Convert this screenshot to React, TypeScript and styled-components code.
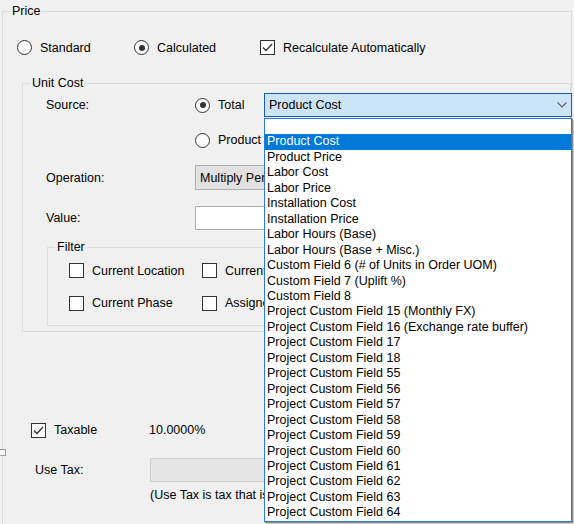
import React from 'react';
import styled, { createGlobalStyle } from 'styled-components';

const GlobalStyle = createGlobalStyle`
  html, body {
    margin: 0;
    padding: 0;
    background: #f0f0f0;
  }
  body {
    font-family: 'Liberation Sans', Arial, sans-serif;
    font-size: 12.5px;
    color: #000;
  }
`;

const Screen = styled.div`
  position: relative;
  width: 574px;
  height: 524px;
  overflow: hidden;
  box-sizing: border-box;
  padding: 4px 0 0 2px;
  background: #f0f0f0;
`;

const Group = styled.fieldset<{ $top: number; $left: number; $right: number; $pb?: number; $open?: boolean }>`
  margin: ${(p) => p.$top}px ${(p) => p.$right}px 0 ${(p) => p.$left}px;
  padding: 0 0 ${(p) => p.$pb ?? 0}px 0;
  border: 1px solid #dcdcdc;
  ${(p) => (p.$open ? 'border-bottom: none; min-height: 560px;' : '')}
  min-width: 0;
`;

const Legend = styled.legend`
  margin-left: 7px;
  padding: 0 2px;
  line-height: 15px;
`;

const Row = styled.div<{ $top: number; $left: number; $cols: string; $h: number }>`
  display: grid;
  grid-template-columns: ${(p) => p.$cols};
  align-items: center;
  margin: ${(p) => p.$top}px 0 0 ${(p) => p.$left}px;
  height: ${(p) => p.$h}px;
  white-space: nowrap;
`;

const Label = styled.span<{ $indent?: number }>`
  padding-left: ${(p) => p.$indent ?? 0}px;
`;

// text that runs under the open drop-down list is cut at its left edge
const Clipped = styled.span<{ $w: number }>`
  display: block;
  width: ${(p) => p.$w}px;
  overflow: hidden;
  white-space: nowrap;
`;

const Option = styled.label<{ $w?: number }>`
  display: flex;
  align-items: center;
  gap: 8px;
  white-space: nowrap;
  ${(p) => (p.$w ? `width: ${p.$w}px; overflow: hidden;` : '')}
`;

const Circle = styled.span<{ $on?: boolean }>`
  position: relative;
  flex: none;
  width: 15px;
  height: 15px;
  box-sizing: border-box;
  border: 1px solid #333;
  border-radius: 50%;
  background: #fff;
  &::after {
    content: '';
    display: ${(p) => (p.$on ? 'block' : 'none')};
    position: absolute;
    left: 3.5px;
    top: 3.5px;
    width: 6px;
    height: 6px;
    border-radius: 50%;
    background: #333;
  }
`;

const Box = styled.span`
  display: flex;
  align-items: center;
  justify-content: center;
  flex: none;
  width: 15px;
  height: 15px;
  box-sizing: border-box;
  border: 1px solid #333;
  background: #fff;
`;

const Radio = ({ label, checked, w }: { label: string; checked?: boolean; w?: number }) => (
  <Option $w={w}>
    <Circle $on={checked} />
    {label}
  </Option>
);

const Check = ({ label, checked, w }: { label: string; checked?: boolean; w?: number }) => (
  <Option $w={w}>
    <Box>
      {checked && (
        <svg width="11" height="9" viewBox="0 0 11 9">
          <polyline points="1,4.5 4,7.5 10,1" fill="none" stroke="#333" strokeWidth="1.3" />
        </svg>
      )}
    </Box>
    {label}
  </Option>
);

const ComboWrap = styled.div`
  position: relative;
  height: 100%;
`;

const Combo = styled.div<{ $focus?: boolean; $w?: number }>`
  display: flex;
  align-items: center;
  justify-content: space-between;
  box-sizing: border-box;
  width: ${(p) => (p.$w ? `${p.$w}px` : 'auto')};
  height: 100%;
  padding: 0 4px;
  border: 1px solid ${(p) => (p.$focus ? '#1a5ea8' : '#adadad')};
  background: ${(p) => (p.$focus ? '#cce4f7' : '#e1e1e1')};
  overflow: hidden;
  white-space: nowrap;
`;

const TextBox = styled.div<{ $disabled?: boolean; $w: number }>`
  box-sizing: border-box;
  width: ${(p) => p.$w}px;
  height: 100%;
  border: 1px solid ${(p) => (p.$disabled ? '#cccccc' : '#b0b0b0')};
  background: ${(p) => (p.$disabled ? '#e4e4e4' : '#fff')};
`;

const DropList = styled.ul`
  position: absolute;
  top: calc(100% + 1px);
  left: 0;
  right: 0;
  height: 404px;
  margin: 0;
  padding: 0;
  list-style: none;
  box-sizing: border-box;
  border: 1px solid #2a7bd4;
  background: #fff;
  box-shadow: 1px 1px 0 #8c8c8c, 2px 2px 0 #c8c8c8;
  overflow: hidden;
  z-index: 5;
`;

const Item = styled.li<{ $selected?: boolean }>`
  height: 15.46px;
  line-height: 15.46px;
  padding-left: 2px;
  white-space: nowrap;
  background: ${(p) => (p.$selected ? '#0078d7' : 'transparent')};
  color: ${(p) => (p.$selected ? '#fff' : '#000')};
`;

const Grip = styled.div`
  position: absolute;
  left: -1px;
  top: 449px;
  width: 5px;
  height: 5px;
  border: 1px solid #9a9a9a;
  background: #fff;
`;

const Chevron = () => (
  <svg width="10" height="6" viewBox="0 0 10 6">
    <polyline points="0.5,0.5 5,5 9.5,0.5" fill="none" stroke="#5f5f5f" strokeWidth="1.2" />
  </svg>
);

const items = [
  '',
  'Product Cost',
  'Product Price',
  'Labor Cost',
  'Labor Price',
  'Installation Cost',
  'Installation Price',
  'Labor Hours (Base)',
  'Labor Hours (Base + Misc.)',
  'Custom Field 6 (# of Units in Order UOM)',
  'Custom Field 7 (Uplift %)',
  'Custom Field 8',
  'Project Custom Field 15 (Monthly FX)',
  'Project Custom Field 16 (Exchange rate buffer)',
  'Project Custom Field 17',
  'Project Custom Field 18',
  'Project Custom Field 55',
  'Project Custom Field 56',
  'Project Custom Field 57',
  'Project Custom Field 58',
  'Project Custom Field 59',
  'Project Custom Field 60',
  'Project Custom Field 61',
  'Project Custom Field 62',
  'Project Custom Field 63',
  'Project Custom Field 64',
];

const SOURCE_COLS = '149px 69px 308px';

export default function App() {
  return (
    <>
      <GlobalStyle />
      <Screen>
        <Group $top={0} $left={0} $right={2} $open>
          <Legend>Price</Legend>
          <Row $top={20.5} $left={14} $cols="117px 126px auto" $h={16}>
            <Radio label="Standard" />
            <Radio label="Calculated" checked />
            <Check label="Recalculate Automatically" checked />
          </Row>

          <Group $top={20} $left={19} $right={0} $pb={5}>
            <Legend>Unit Cost</Legend>
            <Row $top={2.5} $left={23} $cols={SOURCE_COLS} $h={24}>
              <Label>Source:</Label>
              <Radio label="Total" checked />
              <ComboWrap>
                <Combo $focus>
                  Product Cost
                  <Chevron />
                </Combo>
                <DropList>
                  {items.map((it, i) => (
                    <Item key={i} $selected={i === 1}>
                      {it}
                    </Item>
                  ))}
                </DropList>
              </ComboWrap>
            </Row>
            <Row $top={15.5} $left={23} $cols={SOURCE_COLS} $h={15}>
              <span />
              <Radio label="Product Price" w={69} />
            </Row>
            <Row $top={17.5} $left={23} $cols="149px auto" $h={25}>
              <Label>Operation:</Label>
              <Combo $w={70}>Multiply Percentage</Combo>
            </Row>
            <Row $top={16} $left={23} $cols="149px auto" $h={24}>
              <Label>Value:</Label>
              <TextBox $w={70} />
            </Row>

            <Group $top={9.5} $left={24} $right={20} $pb={14.5}>
              <Legend>Filter</Legend>
              <Row $top={8.5} $left={21} $cols="133px auto" $h={15}>
                <Check label="Current Location" />
                <Check label="Current Room" w={62} />
              </Row>
              <Row $top={17.5} $left={21} $cols="133px auto" $h={15}>
                <Check label="Current Phase" />
                <Check label="Assigned To" w={62} />
              </Row>
            </Group>
          </Group>

          <Row $top={90.5} $left={28} $cols="118px auto" $h={15}>
            <Check label="Taxable" checked />
            <span>10.0000%</span>
          </Row>
          <Row $top={20.5} $left={28} $cols="119px auto" $h={24}>
            <Label $indent={4}>Use Tax:</Label>
            <TextBox $disabled $w={115} />
          </Row>
          <Row $top={5.5} $left={28} $cols="119px auto" $h={15}>
            <span />
            <Clipped $w={114}>(Use Tax is tax that is paid by the contractor)</Clipped>
          </Row>
        </Group>
        <Grip />
      </Screen>
    </>
  );
}
